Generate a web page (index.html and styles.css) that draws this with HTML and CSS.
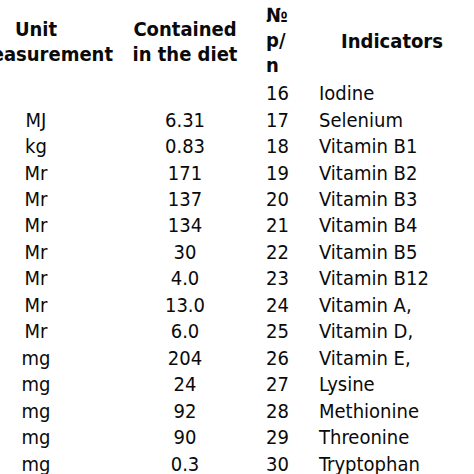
FILE: index.html
```html
<!DOCTYPE html>
<html>
<head>
<meta charset="utf-8">
<link rel="stylesheet" href="styles.css">
</head>
<body>
<div class="sheet">
  <div class="head c1"><span>Unit</span><span class="wide">measurement</span></div>
  <div class="head c2"><span>Contained</span><span>in the diet</span></div>
  <div class="head c3"><span>№</span><span>p/</span><span>n</span></div>
  <div class="head c4"><span>Indicators</span></div>

  <div class="c1"></div><div class="c2"></div><div class="c3">16</div><div class="c4">Iodine</div>
  <div class="c1">MJ</div><div class="c2">6.31</div><div class="c3">17</div><div class="c4">Selenium</div>
  <div class="c1">kg</div><div class="c2">0.83</div><div class="c3">18</div><div class="c4">Vitamin B1</div>
  <div class="c1">Mr</div><div class="c2">171</div><div class="c3">19</div><div class="c4">Vitamin B2</div>
  <div class="c1">Mr</div><div class="c2">137</div><div class="c3">20</div><div class="c4">Vitamin B3</div>
  <div class="c1">Mr</div><div class="c2">134</div><div class="c3">21</div><div class="c4">Vitamin B4</div>
  <div class="c1">Mr</div><div class="c2">30</div><div class="c3">22</div><div class="c4">Vitamin B5</div>
  <div class="c1">Mr</div><div class="c2">4.0</div><div class="c3">23</div><div class="c4">Vitamin B12</div>
  <div class="c1">Mr</div><div class="c2">13.0</div><div class="c3">24</div><div class="c4">Vitamin A,</div>
  <div class="c1">Mr</div><div class="c2">6.0</div><div class="c3">25</div><div class="c4">Vitamin D,</div>
  <div class="c1">mg</div><div class="c2">204</div><div class="c3">26</div><div class="c4">Vitamin E,</div>
  <div class="c1">mg</div><div class="c2">24</div><div class="c3">27</div><div class="c4">Lysine</div>
  <div class="c1">mg</div><div class="c2">92</div><div class="c3">28</div><div class="c4">Methionine</div>
  <div class="c1">mg</div><div class="c2">90</div><div class="c3">29</div><div class="c4">Threonine</div>
  <div class="c1">mg</div><div class="c2">0.3</div><div class="c3">30</div><div class="c4">Tryptophan</div>
</div>
</body>
</html>
```
FILE: styles.css
```css
html, body {
  margin: 0;
  padding: 0;
  background: #ffffff;
  overflow: hidden;
}

.sheet {
  display: grid;
  grid-template-columns: 72px 110px 53px 146px;
  padding-top: 3px;
  font-family: "DejaVu Sans Condensed", "DejaVu Sans", sans-serif;
  font-stretch: condensed;
  font-size: 20px;
  line-height: 26.3px;
  color: #0a0a0a;
  width: 474px;
  height: 474px;
}

.c1 { grid-column: 1; text-align: center; }
.c2 { grid-column: 2; margin-left: 58px; margin-right: -58px; text-align: center; }
.c3 { grid-column: 3; margin-left: 84px; margin-right: -84px; text-align: left; }
.c4 { grid-column: 4; margin-left: 84px; margin-right: -84px; text-align: left; white-space: nowrap; }

.head {
  display: flex;
  flex-direction: column;
  justify-content: center;
  font-weight: bold;
  line-height: 25px;
  height: 77px;
  white-space: nowrap;
}

.head.c1, .head.c2 {
  align-items: center;
}

.head.c3 {
  align-items: flex-start;
  margin-top: -1px;
}

.head.c4 {
  align-items: center;
}

.wide {
  display: block;
  margin-left: -33px;
  margin-right: -47px;
}
```
